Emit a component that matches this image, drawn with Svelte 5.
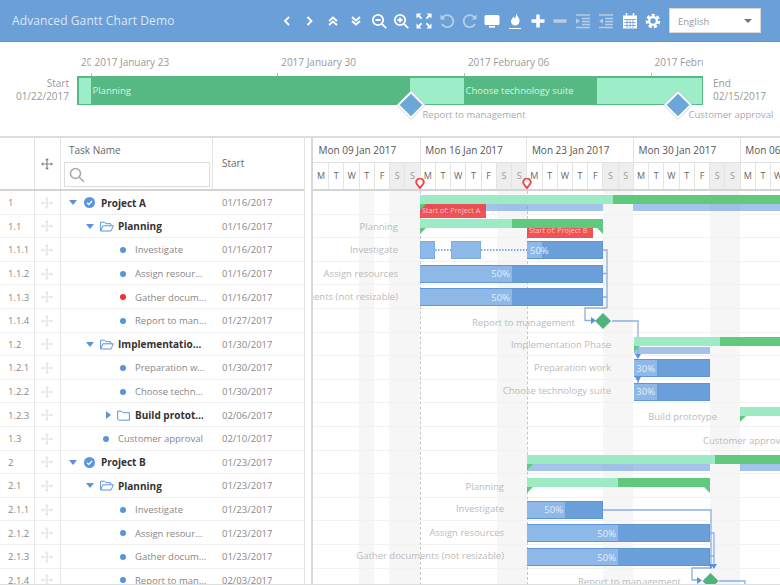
<script>
  const rows = [
    { n: '1', name: 'Project A', date: '01/16/2017', level: 0, kind: 'project' },
    { n: '1.1', name: 'Planning', date: '01/16/2017', level: 1, kind: 'open' },
    { n: '1.1.1', name: 'Investigate', date: '01/16/2017', level: 2, kind: 'task' },
    { n: '1.1.2', name: 'Assign resources', date: '01/16/2017', level: 2, kind: 'task' },
    { n: '1.1.3', name: 'Gather documents (not resizable)', date: '01/16/2017', level: 2, kind: 'task', red: true },
    { n: '1.1.4', name: 'Report to management', date: '01/27/2017', level: 2, kind: 'task' },
    { n: '1.2', name: 'Implementation Phase', date: '01/30/2017', level: 1, kind: 'open' },
    { n: '1.2.1', name: 'Preparation work', date: '01/30/2017', level: 2, kind: 'task' },
    { n: '1.2.2', name: 'Choose technology suite', date: '01/30/2017', level: 2, kind: 'task' },
    { n: '1.2.3', name: 'Build prototype', date: '02/06/2017', level: 2, kind: 'closed' },
    { n: '1.3', name: 'Customer approval', date: '02/10/2017', level: 1, kind: 'task' },
    { n: '2', name: 'Project B', date: '01/23/2017', level: 0, kind: 'project' },
    { n: '2.1', name: 'Planning', date: '01/23/2017', level: 1, kind: 'open' },
    { n: '2.1.1', name: 'Investigate', date: '01/23/2017', level: 2, kind: 'task' },
    { n: '2.1.2', name: 'Assign resources', date: '01/23/2017', level: 2, kind: 'task' },
    { n: '2.1.3', name: 'Gather documents (not resizable)', date: '01/23/2017', level: 2, kind: 'task' },
    { n: '2.1.4', name: 'Report to management', date: '02/03/2017', level: 2, kind: 'task' }
  ];

  const weeks = ['Mon 09 Jan 2017', 'Mon 16 Jan 2017', 'Mon 23 Jan 2017', 'Mon 30 Jan 2017', 'Mon 06 Feb 2017'];
  const days = ['M', 'T', 'W', 'T', 'F', 'S', 'S'];
  const bands = [[359, 15], [389, 31], [497, 30], [603, 30], [710, 30]];
  const axis = ['2017 January 16', '2017 January 23', '2017 January 30', '2017 February 06', '2017 February 13'];

  // page coordinates, shifted onto the chart canvas by ox/oy
  const ox = 313;
  const oy = 191;

  const summaries = [
    { x: 420, w: 360, light: 193, y: 195, left: true },
    { x: 420, w: 183, light: 92, y: 219, left: true, right: true },
    { x: 634, w: 146, light: 86, y: 337, left: true },
    { x: 740, w: 40, light: 40, y: 407, left: true },
    { x: 527, w: 253, light: 188, y: 455, left: true },
    { x: 527, w: 183, light: 91, y: 478, left: true, right: true }
  ];
  const thins = [
    { x: 420, w: 183, y: 204 },
    { x: 633, w: 147, y: 204 },
    { x: 634, w: 76, y: 347 },
    { x: 527, w: 183, y: 464 },
    { x: 740, w: 40, y: 464 }
  ];
  const tasks = [
    { x: 420, w: 15, y: 241 },
    { x: 451, w: 30, y: 241 },
    { x: 527, w: 76, y: 241, done: 15, label: '50%', short: true },
    { x: 420, w: 183, y: 264.5, done: 92, label: '50%' },
    { x: 420, w: 183, y: 288, done: 92, label: '50%' },
    { x: 634, w: 76, y: 359, done: 23, label: '30%' },
    { x: 634, w: 76, y: 382.5, done: 23, label: '30%' },
    { x: 527, w: 76, y: 500.5, done: 38, label: '50%' },
    { x: 527, w: 183, y: 524, done: 91, label: '50%' },
    { x: 527, w: 183, y: 548, done: 91, label: '50%' }
  ];
  const labels = [
    { t: 'Planning', r: 398, y: 227 },
    { t: 'Investigate', r: 398, y: 250 },
    { t: 'Assign resources', r: 398, y: 273.5 },
    { t: 'Gather documents (not resizable)', r: 398, y: 297 },
    { t: 'Report to management', r: 575, y: 322.5 },
    { t: 'Implementation Phase', r: 611, y: 345 },
    { t: 'Preparation work', r: 611, y: 367.5 },
    { t: 'Choose technology suite', r: 611, y: 391 },
    { t: 'Build prototype', r: 717, y: 416.5 },
    { t: 'Customer approval', l: 703, y: 440.5 },
    { t: 'Planning', r: 504, y: 487 },
    { t: 'Investigate', r: 504, y: 509 },
    { t: 'Assign resources', r: 504, y: 533 },
    { t: 'Gather documents (not resizable)', r: 504, y: 556 },
    { t: 'Report to management', r: 681, y: 582 }
  ];
  const tags = [
    { t: 'Start of: Project A', x: 420, y: 202, w: 66 },
    { t: 'Start of: Project B', x: 527, y: 222, w: 66 }
  ];
</script>

{#snippet move(cls)}
  <svg class={cls} viewBox="0 0 12 12" width="12" height="12" aria-hidden="true">
    <path d="M6 1v10M1 6h10" fill="none" stroke="currentColor" stroke-width="1.2" />
    <path d="M6 0l2 2.2H4zM6 12l2-2.2H4zM0 6l2.2-2v4zM12 6l-2.2-2v4z" fill="currentColor" />
  </svg>
{/snippet}

<div class="app">
  <header class="topbar">
    <div class="title">Advanced Gantt Chart Demo</div>
    <div class="tools">
      <svg viewBox="0 0 18 18"><path d="M10 5L6 9l4 4" class="ln" /></svg>
      <svg viewBox="0 0 18 18"><path d="M5.500 5l4 4-4 4" class="ln" /></svg>
      <svg viewBox="0 0 18 18"><path d="M5 9l4-3.500L13 9M5 13l4-3.500 4 3.500" class="ln" /></svg>
      <svg viewBox="0 0 18 18"><path d="M5 5l4 3.500L13 5M5 9l4 3.500L13 9" class="ln" /></svg>
      <svg viewBox="0 0 18 18"><circle cx="8" cy="8" r="5.200" class="ln" /><path d="M12 12l4.200 4.200M5.500 8h5" class="ln" /></svg>
      <svg viewBox="0 0 18 18"><circle cx="8" cy="8" r="5.200" class="ln" /><path d="M12 12l4.200 4.200M5.500 8h5M8 5.500v5" class="ln" /></svg>
      <svg viewBox="0 0 18 18"><path d="M1.500 1.500h5l-1.800 1.800 2.600 2.600-1.400 1.400-2.600-2.600-1.800 1.800zM16.500 1.500v5l-1.800-1.800-2.600 2.600-1.400-1.400 2.600-2.600-1.800-1.800zM1.500 16.500v-5l1.800 1.800 2.600-2.600 1.400 1.400-2.600 2.600 1.800 1.800zM16.500 16.500h-5l1.800-1.800-2.600-2.600 1.400-1.400 2.600 2.600 1.800-1.800z" class="fl" /></svg>
      <svg viewBox="0 0 18 18" class="off"><path d="M4.500 5.500A6 6 0 1 1 4 12" class="ln" /><path d="M2.500 2.500v5h5z" class="fl" /></svg>
      <svg viewBox="0 0 18 18" class="off"><path d="M13.500 5.500A6 6 0 1 0 14 12" class="ln" /><path d="M15.500 2.500v5h-5z" class="fl" /></svg>
      <svg viewBox="0 0 18 18"><rect x="1.500" y="3" width="15" height="10" rx="1.500" class="fl" /><path d="M6 14.800h6" class="ln" /></svg>
      <svg viewBox="0 0 18 18"><path d="M10 1c.6 3 3.600 4.600 3.600 8a4.600 4.600 0 0 1-4.600 4.500c-2.200 0-4-1.700-4-4 0-2.400 1.800-3.300 2.500-5 .8.800 1 1.600 1 2.500C9.500 5.500 10.300 3.500 10 1z" class="fl" /><path d="M3 16.500h12" class="thin" /></svg>
      <svg viewBox="0 0 18 18"><path d="M2.500 9h13M9 2.500v13" class="thick" /></svg>
      <svg viewBox="0 0 18 18" class="off"><path d="M2.500 9h13" class="thick" /></svg>
      <svg viewBox="0 0 18 18" class="off"><path d="M2 3h14M8 6.500h8M8 9.500h8M8 12.500h8M2 15.500h14" class="thin2" /><path d="M2 6.500L6 9l-4 2.500z" class="fl" /></svg>
      <svg viewBox="0 0 18 18" class="off"><path d="M2 3h14M8 6.500h8M8 9.500h8M8 12.500h8M2 15.500h14" class="thin2" /><path d="M6 6.500L2 9l4 2.500z" class="fl" /></svg>
      <svg viewBox="0 0 18 18" class="shifted"><path d="M2 3.500h14v13H2z" class="fl" /><path d="M3 7.500h12M3 10.500h12M3 13.500h12M6 7v9M9 7v9M12 7v9" class="grid" /><path d="M5.500 1v3.500M12.500 1v3.500" class="thin2" /></svg>
      <svg viewBox="0 0 18 18"><circle cx="9" cy="9" r="5.800" class="teeth" /><circle cx="9" cy="9" r="3.900" class="ring" /></svg>
    </div>
    <div class="lang"><span>English</span><i></i></div>
  </header>

  <section class="overview">
    <div class="ends start"><span>Start</span><span>01/22/2017</span></div>
    <div class="track">
      <div class="axis">
        {#each axis as a}
          <div class="tick"><span>{a}</span></div>
        {/each}
      </div>
      <div class="strip">
        <div class="seg a"></div>
        <div class="seg b"></div>
        <div class="seg c"></div>
        <span class="strip-text p">Planning</span>
        <span class="strip-text q">Choose technology suite</span>
      </div>
      <div class="gem g1"></div>
      <div class="gem g2"></div>
      <span class="gem-text t1">Report to management</span>
      <span class="gem-text t2">Customer approval</span>
    </div>
    <div class="ends"><span>End</span><span>02/15/2017</span></div>
  </section>

  <main class="board">
    <div class="table">
      <div class="thead">
        <div class="th blank"></div>
        <div class="th grip">{@render move('head-move')}</div>
        <div class="th taskname">
          <span>Task Name</span>
          <div class="search">
            <svg viewBox="0 0 16 16" width="16" height="16" aria-hidden="true"><circle cx="6.500" cy="6.500" r="5" /><path d="M10.200 10.200L15 15" /></svg>
          </div>
        </div>
        <div class="th startcol">Start</div>
      </div>
      {#each rows as r}
        <div class="tr">
          <div class="td num">{r.n}</div>
          <div class="td grip">{@render move('row-move')}</div>
          <div class="td name lv{r.level}">
            <span class="arrow">
              {#if r.kind === 'project' || r.kind === 'open'}
                <svg viewBox="0 0 8 5" width="8" height="5"><path d="M0 0h8L4 5z" /></svg>
              {:else if r.kind === 'closed'}
                <svg class="side" viewBox="0 0 5 8" width="5" height="8"><path d="M0 0l5 4-5 4z" /></svg>
              {/if}
            </span>
            <span class="icon">
              {#if r.kind === 'project'}
                <svg viewBox="0 0 11 11" width="11" height="11"><circle cx="5.500" cy="5.500" r="5.500" fill="#5b94dc" /><path d="M3 5.700l1.800 1.800L8 4" fill="none" stroke="#fff" stroke-width="1.300" /></svg>
              {:else if r.kind === 'open'}
                <svg viewBox="0 0 14 11" width="14" height="11"><path d="M.6 10V1.200h4l1.200 1.500h5v2M.6 10l2.300-5.200h10.500L11 10z" fill="none" stroke="#5b94dc" stroke-width="1" stroke-linejoin="round" /></svg>
              {:else if r.kind === 'closed'}
                <svg viewBox="0 0 13 11" width="13" height="11"><path d="M.6 9.200V1.200h4l1.200 1.500h6.600v7.500H1.600z" fill="none" stroke="#5b94dc" stroke-width="1" stroke-linejoin="round" /></svg>
              {:else}
                <i class="dot" class:red={r.red}></i>
              {/if}
            </span>
            <span class="label" class:strong={r.kind !== 'task'}>{r.name}</span>
          </div>
          <div class="td date">{r.date}</div>
        </div>
      {/each}
    </div>

    <div class="splitter"></div>

    <div class="chart">
      <div class="weeks">
        {#each weeks as w}
          <div class="week">{w}</div>
        {/each}
      </div>
      <div class="days">
        {#each weeks as w}
          {#each days as d, i}
            <div class="day" class:off={i > 4}>{d}</div>
          {/each}
        {/each}
      </div>
      <div class="canvas">
        {#each bands as b}
          <div class="band" style="left:{b[0] - ox}px;width:{b[1]}px"></div>
        {/each}
        {#each rows as r}
          <div class="gridrow"></div>
        {/each}
        <div class="now" style="left:{420 - ox}px"></div>
        <div class="now" style="left:{527 - ox}px"></div>

        {#each labels as l}
          <span class="tasktext" style={l.r ? `right:${780 - l.r}px;top:${l.y - oy - 8}px` : `left:${l.l - ox}px;top:${l.y - oy - 8}px`}>{l.t}</span>
        {/each}

        {#each thins as t}
          <div class="thinbar" style="left:{t.x - ox}px;top:{t.y - oy}px;width:{t.w}px"></div>
        {/each}

        {#each tags as t}
          <div class="tag" style="left:{t.x - ox}px;top:{t.y - oy}px;width:{t.w}px">{t.t}</div>
        {/each}

        {#each summaries as s}
          <div class="summary" style="left:{s.x - ox}px;top:{s.y - oy}px;width:{s.w}px">
            <div class="sum-light" style="width:{s.light}px"></div>
            {#if s.left}<i class="cap capl"></i>{/if}
            {#if s.right}<i class="cap capr"></i>{/if}
          </div>
        {/each}

        {#each tasks as t}
          <div class="bar" class:plain={!t.done} style="left:{t.x - ox}px;top:{t.y - oy}px;width:{t.w}px">
            {#if t.done}
              <div class="done" class:short={t.short} style="width:{t.done}px"><span>{t.label}</span></div>
            {/if}
          </div>
        {/each}

        <svg class="links" viewBox="313 191 467 394" width="467" height="394" aria-hidden="true">
          <path d="M435 250h16M481 250h46" class="dotted" />
          <path d="M603 250h4v58M603 273.500h4M603 297h4M607 308h-22v12.500h6" class="link" />
          <path d="M612 321h26v16M638 346v8" class="link" />
          <path d="M638 377v6" class="link" />
          <path d="M603 510h108v58M710 533h4v35M710 556h4" class="link" />
          <path d="M711 568h-19v12h5M719 581h26v6" class="link" />
          <path d="M591 317l5 3.500-5 3.500zM635 354h6l-3 5zM635 377h6l-3 5zM708 564h6l-3 5zM711 564h6l-3 5zM697 577l5 3.500-5 3.500z" class="head" />
          <path d="M603 313l8 8-8 8-8-8zM710.500 573l8 8-8 8-8-8z" class="mile" />
        </svg>
      </div>
      <svg class="pin p1" viewBox="0 0 10 12" width="10" height="11" aria-hidden="true"><path d="M5 11L1.600 6.600a4 4 0 1 1 6.800 0z" fill="#fff" stroke="#ef4444" stroke-width="2" /></svg>
      <svg class="pin p2" viewBox="0 0 10 12" width="10" height="11" aria-hidden="true"><path d="M5 11L1.600 6.600a4 4 0 1 1 6.800 0z" fill="#fff" stroke="#ef4444" stroke-width="2" /></svg>
    </div>
  </main>
</div>

<style>
  :global(body) {
    margin: 0;
    background: #fff;
  }

  .app {
    width: 780px;
    height: 585px;
    overflow: hidden;
    display: flex;
    flex-direction: column;
    font-family: "Open Sans", "Liberation Sans", sans-serif;
    font-size: 9.5px;
    color: #888;
    border-bottom: 1px solid #ddd;
    box-sizing: border-box;
  }

  /* top bar */
  .topbar {
    flex: 0 0 42px;
    box-sizing: border-box;
    display: flex;
    align-items: center;
    background: #6a9fd8;
    border-bottom: 1px solid #5e93d0;
    padding-left: 12px;
  }

  .title {
    width: 267px;
    color: #dbe8f7;
    font-size: 12px;
    letter-spacing: 0.1px;
  }

  .tools {
    display: flex;
    gap: 4.700px;
    width: 390px;
  }

  .tools svg {
    width: 18px;
    height: 18px;
    flex: none;
    color: #fff;
  }

  .tools svg.off {
    color: #b9cde4;
  }

  .tools svg.shifted {
    margin-left: 2px;
  }

  .ln {
    fill: none;
    stroke: currentColor;
    stroke-width: 1.800;
  }

  .fl {
    fill: currentColor;
  }

  .thin {
    fill: none;
    stroke: currentColor;
    stroke-width: 1;
  }

  .thin2 {
    fill: none;
    stroke: currentColor;
    stroke-width: 1.500;
  }

  .thick {
    fill: none;
    stroke: currentColor;
    stroke-width: 3.500;
  }

  .grid {
    fill: none;
    stroke: #6a9fd8;
    stroke-width: 0.800;
  }

  .teeth {
    fill: none;
    stroke: currentColor;
    stroke-width: 3;
    stroke-dasharray: 3 2.060;
  }

  .ring {
    fill: none;
    stroke: currentColor;
    stroke-width: 2.400;
  }

  .lang {
    box-sizing: border-box;
    width: 92px;
    height: 25px;
    background: #fff;
    border: 1px solid #d8d8d8;
    display: flex;
    align-items: center;
    justify-content: space-between;
    padding: 1px 8px 0;
    color: #999;
  }

  .lang i {
    width: 0;
    height: 0;
    border-left: 4px solid transparent;
    border-right: 4px solid transparent;
    border-top: 4px solid #777;
  }

  /* overview strip */
  .overview {
    flex: 0 0 96px;
    box-sizing: border-box;
    display: flex;
    border-bottom: 2px solid #ddd;
    font-size: 10px;
    color: #999;
    line-height: 13px;
  }

  .ends {
    width: 77px;
    box-sizing: border-box;
    padding: 35px 0 0 10px;
    display: flex;
    flex-direction: column;
  }

  .ends.start {
    padding: 35px 8px 0 0;
    text-align: right;
  }

  .track {
    position: relative;
    width: 626px;
  }

  .axis {
    display: flex;
    height: 34px;
    overflow: hidden;
    white-space: nowrap;
  }

  .tick {
    flex: 0 0 186.700px;
    box-sizing: border-box;
    overflow: hidden;
    padding: 14px 0 0 4px;
    position: relative;
  }

  .tick::before {
    content: '';
    position: absolute;
    left: 0;
    bottom: 0;
    height: 3px;
    width: 1px;
    background: #bbb;
  }

  .tick:first-child {
    flex-basis: 13.500px;
  }

  .tick:first-child::before {
    display: none;
  }

  .strip {
    position: relative;
    height: 29px;
    background: #56b882;
    font-size: 9.500px;
  }

  .seg {
    position: absolute;
    top: 1.500px;
    bottom: 1.500px;
    background: #9deec8;
  }

  .seg.a {
    left: 1.500px;
    width: 12px;
  }

  .seg.b {
    left: 332.500px;
    width: 54px;
  }

  .seg.c {
    left: 519.500px;
    width: 105px;
  }

  .strip-text {
    position: absolute;
    top: 8px;
    color: #d8f6e6;
    white-space: nowrap;
  }

  .strip-text.p {
    left: 15.500px;
  }

  .strip-text.q {
    left: 388.500px;
  }

  .gem {
    position: absolute;
    top: 53px;
    width: 16px;
    height: 16px;
    background: #6ba7d9;
    border: 2px solid #fff;
    box-shadow: 0 0 1px #aaa;
    transform: rotate(45deg);
  }

  .g1 {
    left: 323.500px;
  }

  .g2 {
    left: 590.500px;
  }

  .gem-text {
    position: absolute;
    top: 66px;
    white-space: nowrap;
    color: #aaa;
    font-size: 9.500px;
  }

  .t1 {
    left: 345.500px;
  }

  .t2 {
    left: 611.500px;
  }

  /* body */
  .board {
    flex: 1;
    min-height: 0;
    display: flex;
  }

  .table {
    width: 304px;
    flex: none;
    border-right: 1px solid #e4e4e4;
    box-sizing: content-box;
  }

  .thead {
    display: grid;
    grid-template-columns: 34.500px 26.500px 152px 91px;
    height: 53px;
    box-sizing: border-box;
    border-bottom: 2px solid #d4d4d4;
    font-size: 10px;
  }

  .th {
    box-sizing: border-box;
    border-right: 1px solid #e2e2e2;
    color: #666;
  }

  .th.grip {
    display: flex;
    align-items: center;
    justify-content: center;
  }

  .head-move {
    color: #888;
  }

  .th.taskname {
    display: flex;
    flex-direction: column;
    padding: 4px 2px 0 3px;
    gap: 4px;
  }

  .th.taskname span {
    padding-left: 5px;
    line-height: 16px;
  }

  .search {
    height: 25px;
    box-sizing: border-box;
    border: 1px solid #ddd;
    display: flex;
    align-items: center;
    padding-left: 4px;
  }

  .search svg {
    fill: none;
    stroke: #aaa;
    stroke-width: 1.600;
  }

  .th.startcol {
    display: flex;
    align-items: center;
    padding: 0 0 2px 9px;
    border-right: 0;
  }

  .tr {
    display: grid;
    grid-template-columns: 34.500px 26.500px 152px 91px;
    height: 23.600px;
    box-sizing: border-box;
    border-bottom: 1px solid #efefef;
    align-items: center;
  }

  .td {
    height: 100%;
    box-sizing: border-box;
    padding-top: 1px;
    display: flex;
    align-items: center;
    white-space: nowrap;
    min-width: 0;
  }

  .num {
    padding-left: 8px;
    border-right: 1px solid #e8e8e8;
  }

  .td.grip {
    justify-content: center;
    border-right: 1px solid #e8e8e8;
  }

  .row-move {
    color: #e2e2e2;
  }

  .date {
    padding-left: 9px;
  }

  .name {
    padding-right: 6px;
  }

  .lv0 {
    padding-left: 8px;
  }

  .lv1 {
    padding-left: 25px;
  }

  .lv2 {
    padding-left: 42px;
  }

  .arrow {
    flex: 0 0 14px;
    display: flex;
    align-items: center;
  }

  .arrow svg {
    fill: #5b94dc;
  }

  .arrow svg.side {
    margin-left: 3px;
  }

  .icon {
    flex: 0 0 18px;
    display: flex;
    align-items: center;
    height: 100%;
  }

  .lv0 .icon svg {
    margin-left: 1px;
  }

  .dot {
    width: 6px;
    height: 6px;
    border-radius: 50%;
    margin-left: 3px;
    background: #5b94dc;
  }

  .dot.red {
    background: #ef3030;
  }

  .label {
    overflow: hidden;
    text-overflow: ellipsis;
  }

  .label.strong {
    color: #333;
    font-weight: 700;
    font-size: 10px;
  }

  .splitter {
    flex: 0 0 8px;
    box-sizing: border-box;
    border-right: 2px solid #d8d8d8;
  }

  /* chart */
  .chart {
    position: relative;
    flex: 1;
    min-width: 0;
    overflow: hidden;
  }

  .weeks,
  .days {
    display: flex;
    white-space: nowrap;
    padding-left: 1px;
  }

  .weeks {
    height: 25px;
    border-bottom: 1px solid #e2e2e2;
    box-sizing: border-box;
  }

  .week {
    flex: 0 0 106.700px;
    box-sizing: border-box;
    padding-left: 4.500px;
    line-height: 24px;
    color: #555;
    font-size: 10px;
    border-right: 1px solid #e2e2e2;
  }

  .days {
    height: 28px;
    box-sizing: border-box;
    border-bottom: 2px solid #d4d4d4;
  }

  .day {
    flex: 0 0 15.243px;
    box-sizing: border-box;
    text-align: center;
    line-height: 26px;
    font-size: 9px;
    color: #666;
    border-right: 1px solid #e4e4e4;
  }

  .day.off {
    background: #eee;
    color: #999;
  }

  .canvas {
    position: relative;
    height: 394px;
    overflow: hidden;
  }

  .band {
    position: absolute;
    top: 0;
    bottom: 0;
    background: #f6f6f6;
  }

  .gridrow {
    position: relative;
    height: 23.600px;
    box-sizing: border-box;
    border-bottom: 1px solid #f2f2f2;
  }

  .now {
    position: absolute;
    top: 0;
    bottom: 0;
    border-left: 1px dashed #c8c8c8;
  }

  .tasktext {
    position: absolute;
    white-space: nowrap;
    line-height: 16px;
    color: #bbb;
  }

  .thinbar {
    position: absolute;
    height: 7px;
    background: rgba(91, 148, 220, 0.56);
  }

  .summary {
    position: absolute;
    height: 9px;
    background: #61c97d;
  }

  .sum-light {
    height: 100%;
    background: #9debc5;
  }

  .cap {
    position: absolute;
    top: 9px;
    border-top: 6px solid #61c97d;
  }

  .capl {
    left: 0;
    border-right: 6px solid transparent;
  }

  .capr {
    right: 0;
    border-left: 6px solid transparent;
  }

  .bar {
    position: absolute;
    height: 18px;
    box-sizing: border-box;
    background: #6b9fd9;
    border: 1px solid #5f96d6;
  }

  .bar.plain {
    background: #8db8e8;
    border-color: #7fade3;
  }

  .done {
    height: 100%;
    margin: 0 0 0 -1px;
    background: #8db8e8;
    display: flex;
    align-items: center;
    justify-content: flex-end;
    padding-right: 2px;
    box-sizing: border-box;
    color: #e4eefa;
    white-space: nowrap;
  }

  .done.short {
    justify-content: flex-start;
    padding: 0 0 0 3px;
  }

  .links {
    position: absolute;
    left: 0;
    top: 0;
    pointer-events: none;
  }

  .link {
    fill: none;
    stroke: #8ab0e2;
    stroke-width: 1.300;
  }

  .dotted {
    fill: none;
    stroke: #5b94dc;
    stroke-width: 1.400;
    stroke-dasharray: 1.500 1.500;
  }

  .head {
    fill: #5b94dc;
  }

  .mile {
    fill: #4fb37d;
  }

  .tag {
    position: absolute;
    height: 16px;
    overflow: hidden;
    background: rgba(239, 68, 68, 0.92);
    color: #f8c4c4;
    font-size: 7.200px;
    line-height: 16px;
    padding-left: 2px;
    box-sizing: border-box;
    white-space: nowrap;
  }

  .pin {
    position: absolute;
    top: 40px;
  }

  .p1 {
    left: 102px;
  }

  .p2 {
    left: 209px;
  }
</style>
